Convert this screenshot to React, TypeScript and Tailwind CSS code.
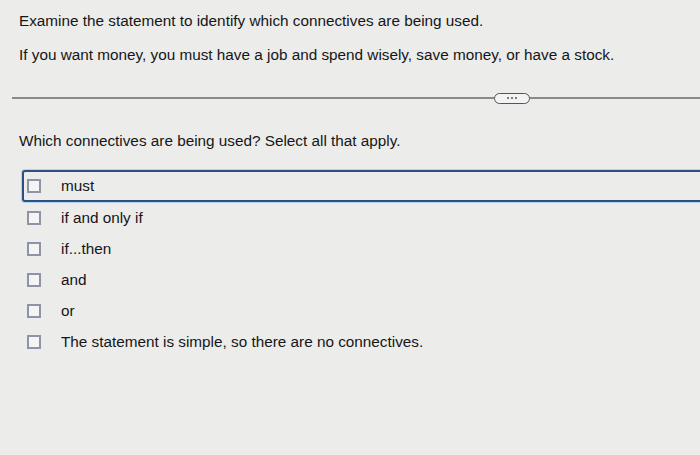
import React from 'react'

const options = [
  'must',
  'if and only if',
  'if...then',
  'and',
  'or',
  'The statement is simple, so there are no connectives.',
]

export default function App() {
  return (
    <div
      className="w-[700px] h-[455px] overflow-hidden bg-[#ececeb] text-[#161616] text-[15.3px]"
      style={{ fontFamily: '"Liberation Sans", Arial, sans-serif' }}
    >
      <div className="pl-[19px] pt-[12px]">
        <p className="leading-[18px]">Examine the statement to identify which connectives are being used.</p>
        <p className="leading-[18px] mt-[16px]">
          If you want money, you must have a job and spend wisely, save money, or have a stock.
        </p>
      </div>

      <div className="flex items-center ml-[12px] mt-[28px] h-[12px]">
        <div className="w-[482px] h-[2px] bg-[#8a8a8a]" />
        <button className="flex items-center justify-center gap-[2px] w-[36px] h-[11px] rounded-full border border-[#555] bg-[#f3f3f3]">
          <span className="w-[2px] h-[2px] rounded-full bg-[#555]" />
          <span className="w-[2px] h-[2px] rounded-full bg-[#555]" />
          <span className="w-[2px] h-[2px] rounded-full bg-[#555]" />
        </button>
        <div className="flex-1 h-[2px] bg-[#8a8a8a]" />
      </div>

      <p className="pl-[19px] mt-[28px] leading-[18px]">Which connectives are being used? Select all that apply.</p>

      <ul className="mt-[21px] ml-[22px]">
        {options.map((opt, i) => (
          <li
            key={opt}
            className={
              'flex items-center h-[31px] pl-[3px] ' +
              (i === 0
                ? 'border-2 border-r-0 border-[#2d4f82] rounded-l-[3px] shadow-[0_0_0_1px_#b9d2f0] -mt-[1px] h-[32px]'
                : 'border-2 border-transparent')
            }
          >
            <span className="w-[14px] h-[14px] border-2 border-[#8f93a6] bg-[#f4f4f4] shrink-0" />
            <span className="ml-[20px] leading-[18px]">{opt}</span>
          </li>
        ))}
      </ul>
    </div>
  )
}
